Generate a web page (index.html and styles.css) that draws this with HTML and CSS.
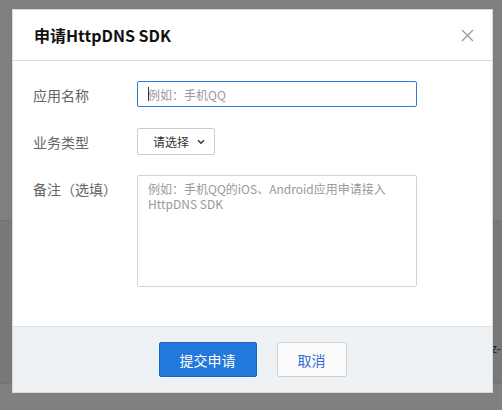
FILE: index.html
```html
<!DOCTYPE html>
<html lang="zh-CN">
<head>
    <meta charset="UTF-8">
    <meta name="viewport" content="width=device-width, initial-scale=1.0">
    <title>申请HttpDNS SDK</title>
    <link rel="stylesheet" href="styles.css">
</head>
<body>

<!-- page behind the mask -->
<div class="page">
    <div class="page-top"></div>
    <div class="page-list"><span class="page-tail">z-</span></div>
    <div class="page-bottom"></div>
</div>

<div class="dialog">
    <div class="dialog-header">
        <h3>申请HttpDNS SDK</h3>
        <button class="close" title="关闭">
            <svg width="13" height="13" viewBox="0 0 13 13"><path d="M1 1L12 12M12 1L1 12" stroke="#9a9a9a" stroke-width="1.3" fill="none"/></svg>
        </button>
    </div>

    <div class="dialog-body">
        <div class="form-row">
            <label class="form-label">应用名称</label>
            <div class="field">
                <input type="text" class="text-input focused" placeholder="例如：手机QQ">
                <span class="caret"></span>
            </div>
        </div>
        <div class="form-row">
            <label class="form-label">业务类型</label>
            <div class="field">
                <div class="select">
                    <span>请选择</span>
                    <svg width="8" height="6" viewBox="0 0 8 6"><path d="M1 1.2L4 4.2L7 1.2" stroke="#333" stroke-width="1.4" fill="none"/></svg>
                </div>
            </div>
        </div>
        <div class="form-row">
            <label class="form-label">备注（选填）</label>
            <div class="field">
                <textarea class="text-area" placeholder="例如：手机QQ的iOS、Android应用申请接入HttpDNS SDK"></textarea>
            </div>
        </div>
    </div>

    <div class="dialog-footer">
        <button class="btn btn-primary">提交申请</button>
        <button class="btn btn-default">取消</button>
    </div>
</div>

</body>
</html>
```

FILE: styles.css
```css
/* Basic styling */
* { box-sizing: border-box; }
body { margin: 0; font-family: "Noto Sans CJK SC", "Liberation Sans", sans-serif; background: #808080; text-spacing-trim: space-all; }

/* Masked page */
.page { height: 410px; }
.page-top { height: 221px; background: #7f7f7f; border-bottom: 1px solid #727272; }
.page-list { height: 163px; background: #787878; border-bottom: 1px solid #727272; position: relative; }
.page-tail { position: absolute; right: 1px; top: 118px; font-size: 12px; color: #1e1e1e; }
.page-bottom { height: 25px; background: #808080; }

/* Dialog */
.dialog { position: absolute; left: 12px; top: 9px; width: 481px; height: 384px; background: #fff; border: 1px solid #d8d8d8; display: flex; flex-direction: column; }

.dialog-header { height: 51px; border-bottom: 1px solid #dcdcdc; display: flex; align-items: center; justify-content: space-between; padding: 0 18px 0 21px; }
.dialog-header h3 { margin: 0; font-size: 16px; font-weight: bold; color: #111; }
.close { border: 0; background: none; padding: 0; width: 13px; height: 13px; display: flex; }

.dialog-body { flex: 1; padding: 20px 20px 0 20px; }
.form-row { display: flex; align-items: flex-start; margin-bottom: 20px; }
.form-label { width: 104px; margin-top: 1px; font-size: 14px; line-height: 26px; color: #666; }
.field { position: relative; }

.text-input { width: 280px; height: 26px; border: 1px solid #2f7bd9; border-radius: 2px; padding: 0 10px; font-family: inherit; font-size: 12px; outline: none; display: block; }
.text-input::placeholder { color: #999; }
.caret { position: absolute; left: 11px; top: 6px; width: 1px; height: 14px; background: #333; }

.select { width: 78px; height: 27px; border: 1px solid #ccc; border-radius: 2px; display: flex; align-items: center; gap: 8px; padding-left: 15px; font-size: 12px; color: #333; }

.text-area { width: 280px; height: 112px; border: 1px solid #d3d3d3; border-radius: 2px; padding: 5px 10px; font-family: inherit; font-size: 12px; line-height: 15px; resize: none; display: block; }
.text-area::placeholder { color: #999; }

/* Footer */
.dialog-footer { height: 66px; border-top: 1px solid #dcdfe3; background: #eff2f5; display: flex; justify-content: center; align-items: flex-start; gap: 20px; padding-top: 15px; }
.btn { height: 35px; border-radius: 2px; font-family: inherit; font-size: 14px; padding: 0; }
.btn-primary { width: 98px; background: #2378db; border: 1px solid #1767c2; color: #fff; }
.btn-default { width: 70px; background: #fbfbfc; border: 1px solid #cfd1d4; color: #2d6fd0; }
```
